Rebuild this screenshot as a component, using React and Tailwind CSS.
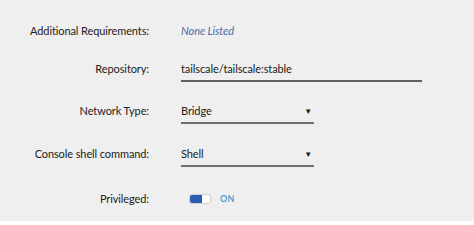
import React from 'react';

function Row({ label, className, children }) {
  return (
    <div className={`flex items-start text-[11px] leading-[16px] tracking-[-0.1px] ${className}`}>
      <div className="w-[149px] text-right text-[#222]">{label}</div>
      <div className="ml-[32px] flex-1">{children}</div>
    </div>
  );
}

function SelectField({ value }) {
  return (
    <div className="w-[133px] flex items-center justify-between border-b-2 border-[#6f6f6f] pb-[3px] text-[#1a1a1a]">
      <span>{value}</span>
      <span className="text-[8px] mr-[2px]">▼</span>
    </div>
  );
}

export default function App() {
  return (
    <div className="w-[474px] h-[225px] bg-white" style={{ fontFamily: 'Lato, sans-serif' }}>
      <div className="h-[221px] bg-[#efefef] pt-[23px]">
        <Row label="Additional Requirements:">
          <div className="italic text-[#4b6cae]">None Listed</div>
        </Row>
        <Row label="Repository:" className="mt-[22px]">
          <div className="w-[241px] border-b-2 border-[#5f5f5f] pb-[3px] text-[#1a1a1a]">
            tailscale/tailscale:stable
          </div>
        </Row>
        <Row label="Network Type:" className="mt-[21px]">
          <SelectField value="Bridge" />
        </Row>
        <Row label="Console shell command:" className="mt-[22px]">
          <SelectField value="Shell" />
        </Row>
        <Row label="Privileged:" className="mt-[24px]">
          <div className="flex items-center h-[16px] ml-[8px]">
            <div className="w-[22px] h-[10px] rounded-[3px] bg-white border border-[#cfcfcf] flex">
              <div className="w-[12px] h-full bg-[#2f5bb7] rounded-l-[2px]" />
            </div>
            <span className="ml-[9px] text-[9px] font-semibold text-[#3d9ad6] tracking-wide">ON</span>
          </div>
        </Row>
      </div>
    </div>
  );
}
